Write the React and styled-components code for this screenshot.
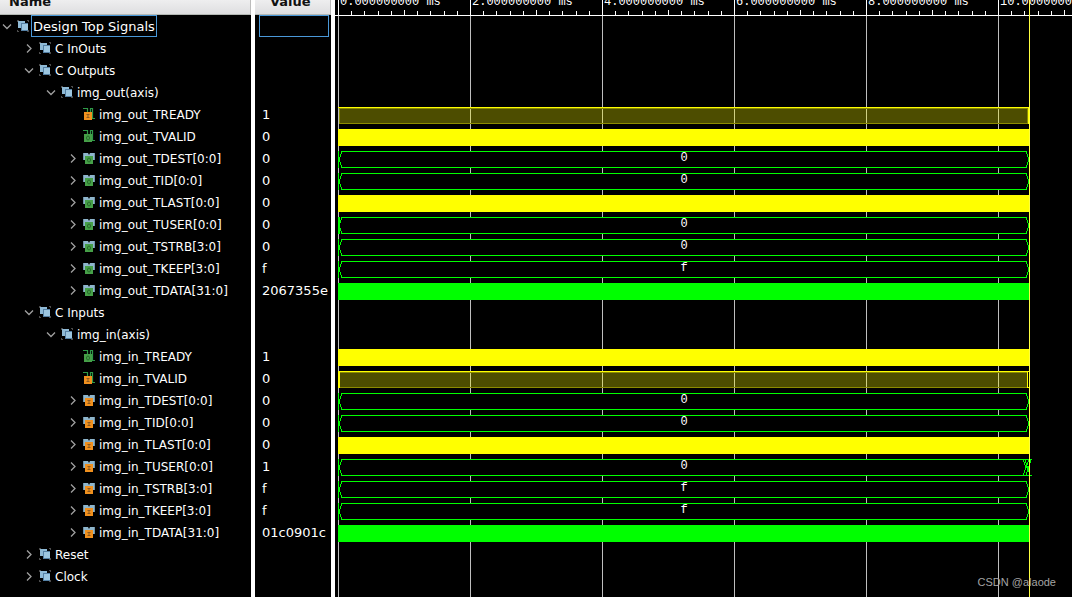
import React, { useState } from 'react';
import styled, { createGlobalStyle } from 'styled-components';

const GlobalStyle = createGlobalStyle`
  * {
    box-sizing: border-box;
  }
  body {
    margin: 0;
    background: #000;
    color: #fff;
    font-family: 'DejaVu Sans', sans-serif;
    font-size: 13px;
  }
`;

const Viewer = styled.main`
  position: relative;
  display: grid;
  grid-template-columns: 251px 76px 1fr;
  column-gap: 4px;
  height: 100vh;
  overflow: hidden;
  background: #fff;
`;

const Panel = styled.section`
  min-width: 0;
  overflow: hidden;
  background: #000;
`;

const PanelHeader = styled.header`
  display: flex;
  align-items: flex-end;
  height: 15px;
  padding: 0 0 4px ${({ $indent }) => $indent}px;
  border-right: 1px solid #bcbcbc;
  border-bottom: 1px solid #b4b8b4;
  background: linear-gradient(#eeeeef, #dedee0);
  color: #111;
  font-weight: bold;
  line-height: 16px;
`;

const List = styled.ul`
  margin: 0;
  padding: 0;
  list-style: none;
`;

const TreeRow = styled.li`
  display: flex;
  align-items: center;
  height: 22px;
  padding-left: ${({ $depth }) => $depth * 22}px;
  font-size: ${({ $depth }) => ($depth === 0 ? 13 : 12)}px;
  white-space: nowrap;
`;

const Toggle = styled.button`
  display: flex;
  align-items: center;
  justify-content: center;
  width: 14px;
  height: 22px;
  margin-right: 3px;
  padding: 0;
  border: 0;
  background: none;
  color: #a0a0a0;
`;

const ToggleSpace = styled.span`
  width: 17px;
`;

const Icon = styled.svg`
  display: block;
  flex: none;
`;

const SignalName = styled.span`
  height: 22px;
  margin-left: 2px;
  padding: 0 1px;
  border: 1px solid ${({ $selected }) => ($selected ? '#4a98d8' : 'transparent')};
  line-height: 22px;
`;

const ValueRow = styled.li`
  height: 22px;
  margin: 0 2px 0 4px;
  padding-left: 2px;
  border: 1px solid ${({ $selected }) => ($selected ? '#4a98d8' : 'transparent')};
  line-height: 22px;
  white-space: nowrap;
`;

const WavePanel = styled(Panel)`
  position: relative;
  padding-left: 3px;
`;

const Ruler = styled.div`
  position: relative;
  height: 16px;
  margin-left: -3px;
  padding-left: 3px;
  border-bottom: 1px solid #fff;
`;

const RulerLabels = styled.div`
  display: flex;
  height: 9px;
  overflow: hidden;
`;

const RulerLabel = styled.span`
  display: flex;
  align-items: flex-end;
  flex: none;
  width: 132px;
  height: 9px;
  padding-left: 2px;
  font-family: 'Liberation Mono', monospace;
  font-size: 12px;
  line-height: 14px;
  white-space: pre;
`;

const Ticks = styled.svg`
  position: absolute;
  left: 3px;
  bottom: -1px;
`;

const Grid = styled.svg`
  position: absolute;
  top: 0;
  left: 3px;
  height: 100%;
`;

const Lanes = styled(List)`
  position: relative;
  margin-top: -1px;
`;

const Lane = styled.li`
  position: relative;
  width: 692px;
  height: 22px;
  padding-top: 4px;
`;

const Wave = styled.svg`
  display: block;
  overflow: visible;
`;

const LaneValue = styled.span`
  position: absolute;
  inset: 4px 0 auto;
  font-family: 'Liberation Mono', monospace;
  font-size: 12px;
  line-height: 14px;
  text-align: center;
`;

const Cursor = styled.svg`
  position: absolute;
  top: 0;
  left: 694px;
  height: 100%;
`;

const Watermark = styled.footer`
  position: absolute;
  right: 16px;
  bottom: 7px;
  color: #a4a4a4;
  font-family: 'Liberation Sans', sans-serif;
  font-size: 11px;
  line-height: 16px;
`;

// dir: o = output, i = input
const SIGNALS = [
  { name: 'Design Top Signals', depth: 0, icon: 'group', open: true },
  { name: 'C InOuts', depth: 1, icon: 'group', open: false },
  { name: 'C Outputs', depth: 1, icon: 'group', open: true },
  { name: 'img_out(axis)', depth: 2, icon: 'group', open: true },
  { name: 'img_out_TREADY', depth: 3, icon: 'wire', dir: 'i', value: '1', wave: 'high' },
  { name: 'img_out_TVALID', depth: 3, icon: 'wire', dir: 'o', value: '0', wave: 'yellow' },
  { name: 'img_out_TDEST[0:0]', depth: 3, icon: 'bus', dir: 'o', value: '0', wave: 'bus', label: '0' },
  { name: 'img_out_TID[0:0]', depth: 3, icon: 'bus', dir: 'o', value: '0', wave: 'bus', label: '0' },
  { name: 'img_out_TLAST[0:0]', depth: 3, icon: 'bus', dir: 'o', value: '0', wave: 'yellow' },
  { name: 'img_out_TUSER[0:0]', depth: 3, icon: 'bus', dir: 'o', value: '0', wave: 'busStart', label: '0' },
  { name: 'img_out_TSTRB[3:0]', depth: 3, icon: 'bus', dir: 'o', value: '0', wave: 'bus', label: '0' },
  { name: 'img_out_TKEEP[3:0]', depth: 3, icon: 'bus', dir: 'o', value: 'f', wave: 'bus', label: 'f' },
  { name: 'img_out_TDATA[31:0]', depth: 3, icon: 'bus', dir: 'o', value: '2067355e', wave: 'green' },
  { name: 'C Inputs', depth: 1, icon: 'group', open: true },
  { name: 'img_in(axis)', depth: 2, icon: 'group', open: true },
  { name: 'img_in_TREADY', depth: 3, icon: 'wire', dir: 'o', value: '1', wave: 'yellow' },
  { name: 'img_in_TVALID', depth: 3, icon: 'wire', dir: 'i', value: '0', wave: 'highDrop' },
  { name: 'img_in_TDEST[0:0]', depth: 3, icon: 'bus', dir: 'i', value: '0', wave: 'bus', label: '0' },
  { name: 'img_in_TID[0:0]', depth: 3, icon: 'bus', dir: 'i', value: '0', wave: 'bus', label: '0' },
  { name: 'img_in_TLAST[0:0]', depth: 3, icon: 'bus', dir: 'i', value: '0', wave: 'yellow' },
  { name: 'img_in_TUSER[0:0]', depth: 3, icon: 'bus', dir: 'i', value: '1', wave: 'busEnd', label: '0' },
  { name: 'img_in_TSTRB[3:0]', depth: 3, icon: 'bus', dir: 'i', value: 'f', wave: 'bus', label: 'f' },
  { name: 'img_in_TKEEP[3:0]', depth: 3, icon: 'bus', dir: 'i', value: 'f', wave: 'bus', label: 'f' },
  { name: 'img_in_TDATA[31:0]', depth: 3, icon: 'bus', dir: 'i', value: '01c0901c', wave: 'green' },
  { name: 'Reset', depth: 1, icon: 'group', open: false },
  { name: 'Clock', depth: 1, icon: 'group', open: false },
];

const MAJOR = [0, 2, 4, 6, 8, 10];
const STEP = 132;

const Chevron = ({ open }) => (
  <Icon width="10" height="10" viewBox="0 0 10 10" fill="none" stroke="currentColor" strokeWidth="1.3">
    <path d={open ? 'M1 3.5l4 4 4-4' : 'M3 1.5l4 4-4 4'} />
  </Icon>
);

const GroupIcon = () => (
  <Icon width="12" height="12" viewBox="0 0 12 12" shapeRendering="crispEdges">
    <path d="M0 0h2v1H1v1H0zM10 0h2v2h-1V1h-1zM0 10h1v1h1v1H0zM11 10h1v2h-2v-1h1z" fill="#4c4c4c" />
    <path d="M1 1h7v7H1z" fill="#8fbad6" />
    <path d="M4 3h7v8H4z" fill="#5580a4" />
    <path d="M5 4h6v6H5z" fill="#9cc6e0" />
  </Icon>
);

const PortBadge = ({ dir, x, y }) => (
  <g transform={`translate(${x} ${y})`}>
    <path d="M0 0h8v8H0z" fill={dir === 'i' ? '#f0901e' : '#46a048'} />
    {dir === 'i' ? (
      <path d="M2.5 2.5h3M2.5 5.5h3M4 2.5v3" stroke="#8a5a20" fill="none" />
    ) : (
      <ellipse cx="4" cy="4" rx="1.5" ry="2" stroke="#28692c" fill="none" />
    )}
  </g>
);

const WireIcon = ({ dir }) => (
  <Icon width="12" height="12" viewBox="0 0 12 12">
    <path d="M0 .5h4.5V5M7.5 6V.5h2v10H12" stroke="#2f9a48" strokeWidth="1.2" fill="none" />
    <PortBadge dir={dir} x={1} y={4} />
  </Icon>
);

const BusIcon = ({ dir }) => (
  <Icon width="12" height="12" viewBox="0 0 12 12">
    <path d="M0 1h5l1 2 1-2h5v7H0z" fill="#8fb6cc" />
    <path d="M0 1h1v7H0zM11 1h1v7h-1z" fill="#6f93a8" />
    <PortBadge dir={dir} x={2} y={4} />
  </Icon>
);

const SignalIcon = ({ icon, dir }) => {
  if (icon === 'group') return <GroupIcon />;
  if (icon === 'wire') return <WireIcon dir={dir} />;
  return <BusIcon dir={dir} />;
};

const Waveform = ({ wave }) => (
  <Wave width="692" height="17" viewBox="0 0 692 17" shapeRendering="crispEdges" fill="none">
    {wave === 'yellow' && <rect width="692" height="17" fill="#ffff00" />}
    {wave === 'green' && <rect width="692" height="17" fill="#00ff00" />}
    {(wave === 'high' || wave === 'highDrop') && (
      <>
        <rect x="1" y="1" width="689" height="16" fill="#ffff00" fillOpacity="0.3" />
        <path d="M1.5 1.5h688v15H1.5z" stroke="#8c8c00" />
        <path d="M0 .5h691" stroke="#ffff00" />
      </>
    )}
    {wave === 'high' && <path d="M690 0h2v17h-2z" fill="#ffff00" />}
    {wave === 'highDrop' && (
      <>
        <path d="M0 0h2v17H0z" fill="#ffff00" />
        <path d="M689.5 0v16.5H692" stroke="#ffff00" />
      </>
    )}
    {(wave === 'bus' || wave === 'busStart') && (
      <>
        <path d="M0 0h692v17H0z" fill="#000" />
        <path d="M4 .5h684l3 8-3 8H4l-3-8z" stroke="#00ff00" />
        <path d={wave === 'busStart' ? 'M0 0h2v17H0z' : 'M0 0h1v17H0z'} fill="#00ff00" />
      </>
    )}
    {wave === 'busEnd' && (
      <>
        <path d="M0 0h692v17H0z" fill="#000" />
        <path d="M4 .5h681l3 8-3 8H4l-3-8z" stroke="#00ff00" />
        <path d="M0 0h1v17H0z" fill="#00ff00" />
        <path d="M685 16.5l6-16M687 .5l5 16M688 16.5l5-16h1M685 .5h9M685 16.5h9" stroke="#00ff00" />
      </>
    )}
  </Wave>
);

const TimeRuler = () => (
  <Ruler>
    <RulerLabels>
      {MAJOR.map((ms) => (
        <RulerLabel key={ms}>{`${ms}.000000000 ms`}</RulerLabel>
      ))}
    </RulerLabels>
    <Ticks width="740" height="16" shapeRendering="crispEdges">
      {Array.from({ length: 57 }, (_, i) => {
        const x = Math.round((i * STEP) / 10);
        const size = i % 10 === 0 ? 16 : i % 5 === 0 ? 6 : 5;
        return <rect key={i} x={x} y={16 - size} width="1" height={size} fill="#fff" />;
      })}
    </Ticks>
  </Ruler>
);

const App = () => {
  const [selected, setSelected] = useState('Design Top Signals');

  return (
    <>
      <GlobalStyle />
      <Viewer>
        <Panel>
          <PanelHeader $indent={9}>Name</PanelHeader>
          <List>
            {SIGNALS.map((s) => (
              <TreeRow key={s.name} $depth={s.depth} onClick={() => setSelected(s.name)}>
                {s.icon === 'wire' ? (
                  <ToggleSpace />
                ) : (
                  <Toggle type="button" aria-label={s.name} aria-expanded={!!s.open}>
                    <Chevron open={s.open} />
                  </Toggle>
                )}
                <SignalIcon icon={s.icon} dir={s.dir} />
                <SignalName $selected={selected === s.name}>{s.name}</SignalName>
              </TreeRow>
            ))}
          </List>
        </Panel>
        <Panel>
          <PanelHeader $indent={15}>Value</PanelHeader>
          <List>
            {SIGNALS.map((s) => (
              <ValueRow key={s.name} $selected={selected === s.name}>{s.value}</ValueRow>
            ))}
          </List>
        </Panel>
        <WavePanel>
          <Grid width="700" shapeRendering="crispEdges">
            {MAJOR.map((ms, i) => (
              <rect key={ms} x={i * STEP} width="1" height="100%" fill="#bebebe" />
            ))}
          </Grid>
          <TimeRuler />
          <Lanes>
            {SIGNALS.map((s) => (
              <Lane key={s.name}>
                {s.wave && <Waveform wave={s.wave} />}
                {s.label && <LaneValue>{s.label}</LaneValue>}
              </Lane>
            ))}
          </Lanes>
          <Cursor width="1">
            <rect width="1" height="100%" fill="#ffff40" />
          </Cursor>
        </WavePanel>
        <Watermark>CSDN @alaode</Watermark>
      </Viewer>
    </>
  );
};

export default App;
